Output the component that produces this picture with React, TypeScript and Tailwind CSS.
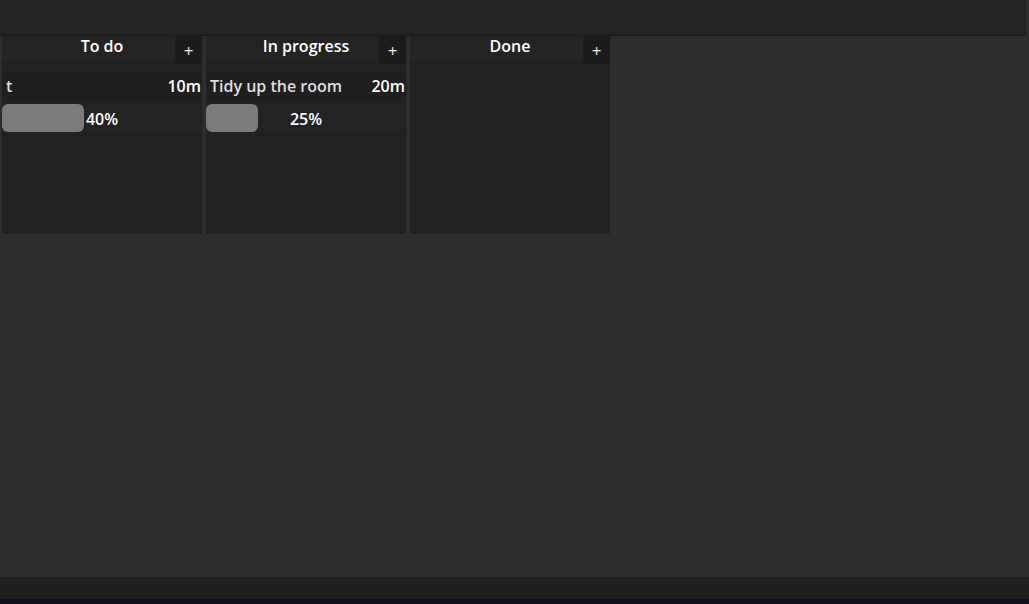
type Task = { name: string; time: string; progress: number };
type Column = { title: string; tasks: Task[] };

const columns: Column[] = [
  { title: 'To do', tasks: [{ name: 't', time: '10m', progress: 40 }] },
  { title: 'In progress', tasks: [{ name: 'Tidy up the room', time: '20m', progress: 25 }] },
  { title: 'Done', tasks: [] },
];

const TaskCard = ({ task }: { task: Task }) => (
  <div className="flex flex-col gap-1">
    <div className="flex h-[28px] items-center justify-between bg-[#1f1f1f] pl-1 pr-[1px]">
      <span className="text-[#dedede]">{task.name}</span>
      <span className="text-white">{task.time}</span>
    </div>
    <div className="relative flex h-[28px] items-center justify-center bg-[#232323] pt-[1px]">
      <div
        className="absolute left-0 top-0 h-full rounded-md bg-[#7b7b7b]"
        style={{ width: `${task.progress * 1.03}%` }}
      />
      <span className="relative text-white">{task.progress}%</span>
    </div>
  </div>
);

const BoardColumn = ({ column }: { column: Column }) => (
  <div className="flex h-[198px] w-[200px] flex-col rounded-b-[2px] bg-[#212121]">
    <div className="relative h-[28px]">
      <div className="mr-[27px] h-[25px] bg-[#242424]" />
      <div className="absolute inset-x-0 top-0 text-center leading-[20px] text-white">
        {column.title}
      </div>
      <button className="absolute right-0 top-0 flex h-[28px] w-[27px] items-center justify-center bg-[#1c1c1c] pt-[1px] text-[17px] font-normal text-[#e8e8e8]">
        +
      </button>
    </div>
    <div className="mt-2 flex flex-col gap-2">
      {column.tasks.map((task) => (
        <TaskCard key={task.name} task={task} />
      ))}
    </div>
  </div>
);

export default function App() {
  return (
    <div
      className="relative flex h-[604px] w-[1029px] flex-col overflow-hidden bg-[#2d2d2d] text-[16px] font-semibold"
      style={{ fontFamily: '"Open Sans", "Noto Sans", sans-serif' }}
    >
      <div className="h-[36px] w-[1026px] shrink-0 rounded-br-[3px] border-b border-[#1a1a1a] bg-[#232323]" />
      <div className="flex flex-1 items-start gap-1 px-[2px]">
        {columns.map((column) => (
          <BoardColumn key={column.title} column={column} />
        ))}
      </div>
      <div className="h-[22px] shrink-0 bg-[#202020]" />
      <div className="h-[5px] shrink-0 bg-[#0f1117]" />
    </div>
  );
}
